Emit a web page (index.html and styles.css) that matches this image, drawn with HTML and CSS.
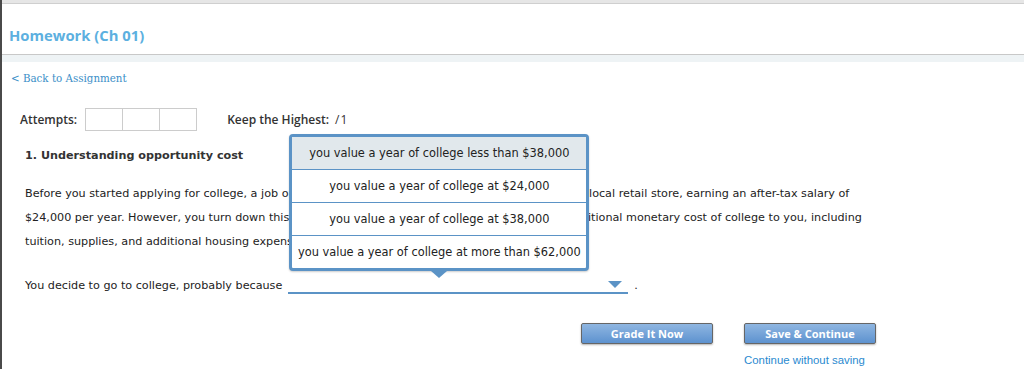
FILE: index.html
```html
<!DOCTYPE html>
<html>
<head>
<meta charset="utf-8">
<link rel="stylesheet" href="styles.css">
</head>
<body>
<div class="page">
  <div class="topstrip"></div>
  <header class="header">
    <h1 class="title">Homework (Ch 01)</h1>
  </header>
  <div class="band"></div>
  <main class="content">
    <a class="back" href="#">&lt; Back to Assignment</a>
    <div class="attempts-row">
      <span class="label">Attempts:</span>
      <div class="boxes"><span></span><span></span><span></span></div>
      <span class="label keep">Keep the Highest:</span>
      <span class="score">/ 1</span>
    </div>
    <h2 class="qtitle">1. Understanding opportunity cost</h2>
    <p class="para">Before you started applying for college, a job opportunity came along to work as a stock helper at a local retail store, earning an after-tax salary of<br>$24,000 per year. However, you turn down this job offer in order to attend college full-time. The additional monetary cost of college to you, including<br>tuition, supplies, and additional housing expenses, is $38,000 per year.</p>
    <div class="answer">
      <span>You decide to go to college, probably because</span>
      <div class="select-wrap">
        <span class="select"><span class="arrow"></span></span>
        <div class="popup">
          <div class="opt selected">you value a year of college less than $38,000</div>
          <div class="opt">you value a year of college at $24,000</div>
          <div class="opt">you value a year of college at $38,000</div>
          <div class="opt">you value a year of college at more than $62,000</div>
          <span class="pointer"></span>
        </div>
      </div>
      <span class="dot">.</span>
    </div>
    <div class="actions">
      <button class="btn">Grade It Now</button>
      <div class="save-col">
        <button class="btn">Save &amp; Continue</button>
        <a class="skip" href="#">Continue without saving</a>
      </div>
    </div>
  </main>
</div>
</body>
</html>
```

FILE: styles.css
```css
html, body {
  margin: 0;
  padding: 0;
  background: #fff;
}
.page {
  border-left: 2px solid #4a4a4a;
  height: 369px;
  box-sizing: border-box;
  overflow: hidden;
}
.topstrip {
  height: 3px;
  background: #e6e6e6;
  border-bottom: 1px solid #cfcfcf;
}
.header {
  height: 50px;
  border-bottom: 1px solid #c8c8c8;
  display: flex;
  align-items: flex-end;
}
.title {
  margin: 0 0 9px 7px;
  font-family: "Open Sans", sans-serif;
  font-size: 14.8px;
  font-weight: 700;
  color: #5cb0e0;
  line-height: 20px;
}
.band {
  height: 7px;
  background: #eef3f5;
}
.content {
  padding: 8px 0 0 9px;
  position: relative;
}
.back {
  display: block;
  font-family: "DejaVu Serif", serif;
  font-size: 10.3px;
  color: #3c8fc8;
  text-decoration: none;
  line-height: 17px;
}
.attempts-row {
  display: flex;
  align-items: center;
  margin: 21px 0 0 9px;
  font-family: "Open Sans", sans-serif;
  font-size: 12px;
  color: #333;
}
.label {
  font-weight: 600;
}
.boxes {
  display: flex;
  margin-left: 8px;
  border: 1px solid #ccc;
}
.boxes span {
  width: 36px;
  height: 21px;
  border-left: 1px solid #ccc;
}
.boxes span:first-child {
  border-left: none;
}
.keep {
  margin-left: 30px;
}
.score {
  margin-left: 6px;
  word-spacing: -2px;
}
.qtitle {
  margin: 17px 0 0 14px;
  font-family: "DejaVu Sans", Verdana, sans-serif;
  font-size: 11.2px;
  font-weight: 700;
  color: #333;
  line-height: 16px;
}
.para {
  margin: 18px 0 0 14px;
  font-family: "DejaVu Sans", Verdana, sans-serif;
  font-size: 11.2px;
  color: #222;
  line-height: 24px;
  white-space: nowrap;
}
.answer {
  display: flex;
  align-items: flex-end;
  margin: 21px 0 0 14px;
  font-family: "DejaVu Sans", Verdana, sans-serif;
  font-size: 11.2px;
  color: #222;
  line-height: 17px;
}
.select-wrap {
  position: relative;
  margin-left: 6px;
}
.select {
  display: block;
  width: 340px;
  height: 17px;
  border-bottom: 2px solid #5b93c6;
  position: relative;
}
.arrow {
  position: absolute;
  right: 6px;
  top: 6px;
  width: 0;
  height: 0;
  border-left: 7px solid transparent;
  border-right: 7px solid transparent;
  border-top: 7px solid #5b93c6;
}
.dot {
  margin-left: 6px;
}
.popup {
  position: absolute;
  left: 1px;
  bottom: 23px;
  width: 294px;
  border: 3px solid #5b93c6;
  border-radius: 4px;
  background: #fff;
  box-shadow: 0 1px 2px rgba(0,0,0,0.2);
  font-size: 11.4px;
}
.opt {
  height: 32px;
  line-height: 32px;
  text-align: center;
  border-top: 1px solid #5b93c6;
  white-space: nowrap;
  color: #222;
}
.opt:first-child {
  border-top: none;
}
.opt.selected {
  background: #e1e8ec;
}
.pointer {
  position: absolute;
  left: 139px;
  bottom: -10px;
  width: 0;
  height: 0;
  border-left: 8px solid transparent;
  border-right: 8px solid transparent;
  border-top: 7px solid #5b93c6;
}
.actions {
  display: flex;
  margin: 29px 0 0 570px;
  gap: 31px;
}
.save-col {
  display: flex;
  flex-direction: column;
  align-items: flex-start;
  gap: 10px;
}
.btn {
  width: 132px;
  height: 21px;
  padding: 0;
  border: 1px solid #666;
  border-radius: 2px;
  background: linear-gradient(#8fb6e1, #5d92cf);
  color: #fff;
  font-family: "Open Sans", sans-serif;
  font-size: 11px;
  font-weight: 700;
  box-shadow: 0 1px 2px rgba(0,0,0,0.3);
}
.skip {
  font-family: "Liberation Sans", Arial, sans-serif;
  font-size: 11.4px;
  color: #2a8ad0;
  text-decoration: none;
}
```
